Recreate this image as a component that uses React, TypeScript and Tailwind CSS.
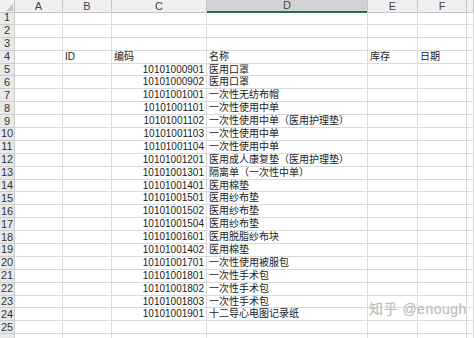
import React from 'react';

const cols = ['A', 'B', 'C', 'D', 'E', 'F', ''];

const items: [string, string][] = [
    ['10101000901', '医用口罩'],
    ['10101000902', '医用口罩'],
    ['10101001001', '一次性无纺布帽'],
    ['10101001101', '一次性使用中单'],
    ['10101001102', '一次性使用中单（医用护理垫）'],
    ['10101001103', '一次性使用中单'],
    ['10101001104', '一次性使用中单'],
    ['10101001201', '医用成人康复垫（医用护理垫）'],
    ['10101001301', '隔离单（一次性中单）'],
    ['10101001401', '医用棉垫'],
    ['10101001501', '医用纱布垫'],
    ['10101001502', '医用纱布垫'],
    ['10101001504', '医用纱布垫'],
    ['10101001601', '医用脱脂纱布块'],
    ['10101001402', '医用棉垫'],
    ['10101001701', '一次性使用被服包'],
    ['10101001801', '一次性手术包'],
    ['10101001802', '一次性手术包'],
    ['10101001803', '一次性手术包'],
    ['10101001901', '十二导心电图记录纸'],
];

const gridCols = 'grid grid-cols-[15px_48px_49px_95px_161px_50px_49px_1fr]';
const cell = 'border-r border-b border-[#dadada] overflow-hidden whitespace-nowrap leading-[12px] px-[2px]';

function rowCells(n: number): string[] {
    if (n === 4) return ['', 'ID', '编码', '名称', '库存', '日期', ''];
    if (n >= 5 && n <= 24) {
        const [code, name] = items[n - 5];
        return ['', '', code, name, '', '', ''];
    }
    return ['', '', '', '', '', '', ''];
}

const App: React.FC = () => {
    const rows = Array.from({ length: 26 }, (_, i) => i + 1);

    return (
        <div
            className="relative w-[474px] h-[338px] overflow-hidden bg-white text-[#1a1a1a]"
            style={{ fontFamily: '"Liberation Sans", "Noto Sans CJK SC", sans-serif' }}
        >
            {/* column header */}
            <div className={`${gridCols} h-[12px] bg-[#f0f0f0] text-[11px] text-[#444]`}>
                <div className="relative border-r border-b border-[#c6c6c6]">
                    <div className="absolute right-[1px] bottom-[1px] w-0 h-0 border-l-[7px] border-l-transparent border-b-[7px] border-b-[#c4c4c4]" />
                </div>
                {cols.map((c, i) => (
                    <div
                        key={i}
                        className={
                            c === 'D'
                                ? 'flex items-center justify-center bg-[#d3d3d3] border-r border-[#c6c6c6] border-b-2 border-b-[#217346] leading-none'
                                : 'flex items-center justify-center border-r border-b border-[#c6c6c6] leading-none'
                        }
                    >
                        {c}
                    </div>
                ))}
            </div>

            {rows.map((n) => {
                const cells = rowCells(n);
                return (
                    <div key={n} className={`${gridCols} h-[12.9px] text-[10px]`}>
                        <div className="flex items-center justify-center bg-[#e9e9e9] border-r border-b border-[#cdcdcd] text-[11px] text-[#333] leading-none">
                            {n <= 25 ? n : ''}
                        </div>
                        {cells.map((v, i) => (
                            <div key={i} className={`${cell} ${i === 2 && n !== 4 ? 'text-right' : 'text-left'}`}>
                                {v}
                            </div>
                        ))}
                    </div>
                );
            })}

            {/* watermark */}
            <div className="absolute left-[369px] top-[302px] text-[14px] leading-none text-[#bdbdbd] tracking-[0.5px] [text-shadow:0_0_1px_#e0e0e0]">
                知乎 @enough
            </div>
        </div>
    );
};

export default App;
